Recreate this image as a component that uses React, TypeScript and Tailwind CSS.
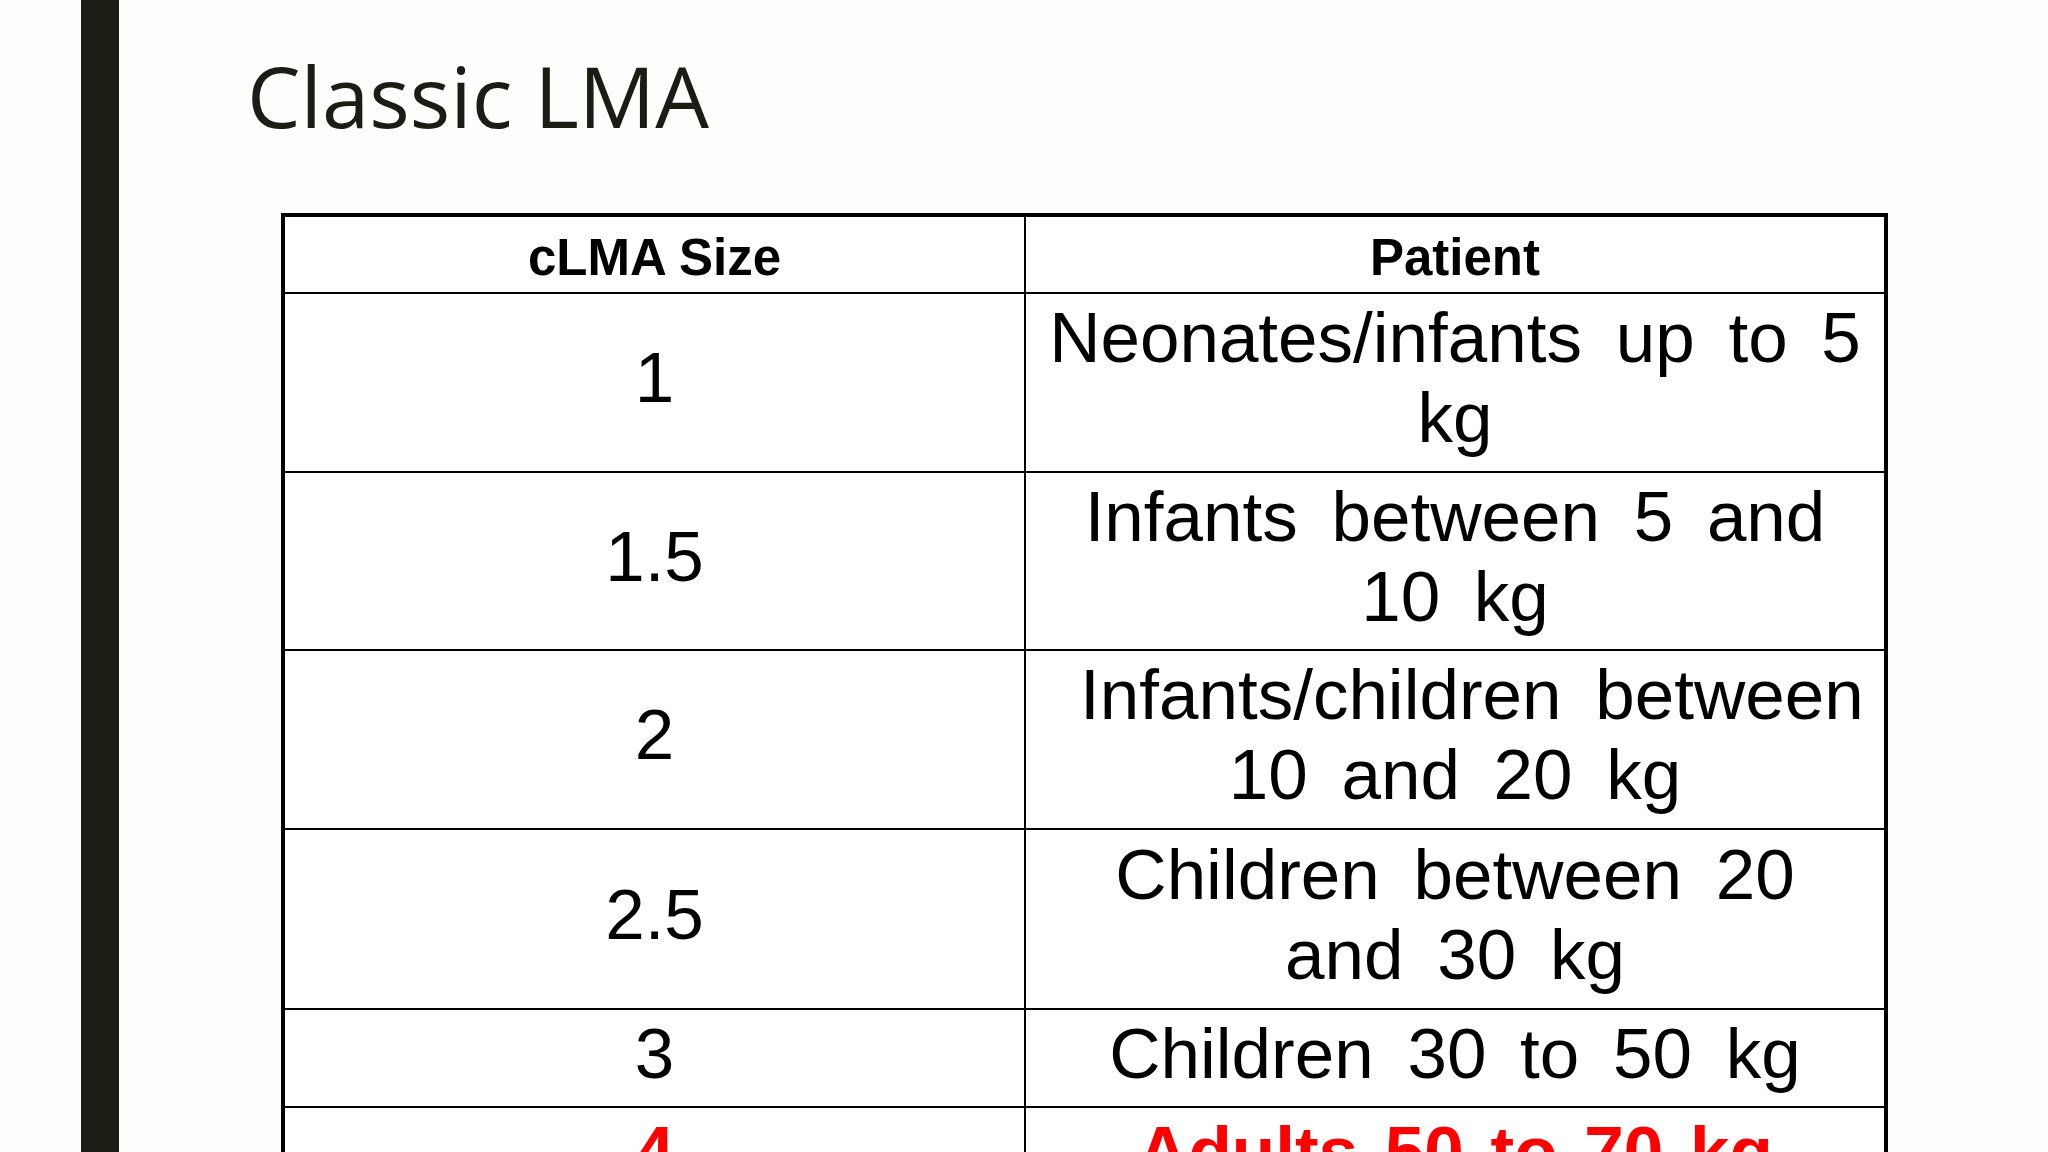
import React from "react";

type Row = { size: string; patient: string; h: string; red?: boolean };

const rows: Row[] = [
  { size: "1", patient: "Neonates/infants up to 5 kg", h: "h-[179px]" },
  { size: "1.5", patient: "Infants between 5 and 10 kg", h: "h-[178px]" },
  { size: "2", patient: "\u00a0Infants/children between 10 and 20 kg", h: "h-[179px]" },
  { size: "2.5", patient: "Children between 20 and 30 kg", h: "h-[180px]" },
  { size: "3", patient: "Children 30 to 50 kg", h: "h-[98px]" },
  { size: "4", patient: "Adults 50 to 70 kg", h: "h-[98px]", red: true },
];

const cellFont = "font-['Liberation_Sans',Arial,sans-serif]";

export default function App() {
  return (
    <div className="w-[2048px] h-[1152px] bg-[#fdfefc] flex overflow-hidden">
      {/* left accent bar */}
      <div className="ml-[81px] w-[38px] h-full bg-[#1e1e16] shrink-0" />

      <div className="flex flex-col">
        <h1 className="mt-[53px] ml-[128px] text-[85px] leading-[85px] font-normal text-[#1c1c14] font-['Open_Sans',sans-serif] whitespace-nowrap">
          Classic LMA
        </h1>

        <div className={`mt-[75px] ml-[162px] w-[1607px] border-4 border-black bg-white text-black ${cellFont}`}>
          {/* header */}
          <div className="flex h-[75px]">
            <div className="w-[741px] border-r-2 border-black flex items-center justify-center pt-[6px] text-[51px] leading-[58px] font-bold">
              cLMA Size
            </div>
            <div className="flex-1 flex items-center justify-center pt-[6px] text-[51px] leading-[58px] font-bold">
              Patient
            </div>
          </div>

          {rows.map((r) => (
            <div
              key={r.size}
              className={`flex border-t-2 border-black ${r.h} ${r.red ? "text-[#ff0000] font-bold" : ""}`}
            >
              <div className="w-[741px] border-r-2 border-black flex items-center justify-center pb-[9px] text-[71px] leading-[80px]">
                {r.size}
              </div>
              <div className="flex-1 flex items-center justify-center pb-[9px]">
                <div
                  className={`w-[822px] text-center text-[71px] leading-[80px] ${
                    r.red ? "[word-spacing:7px]" : "[word-spacing:14px]"
                  }`}
                >
                  {r.patient}
                </div>
              </div>
            </div>
          ))}
        </div>
      </div>
    </div>
  );
}
